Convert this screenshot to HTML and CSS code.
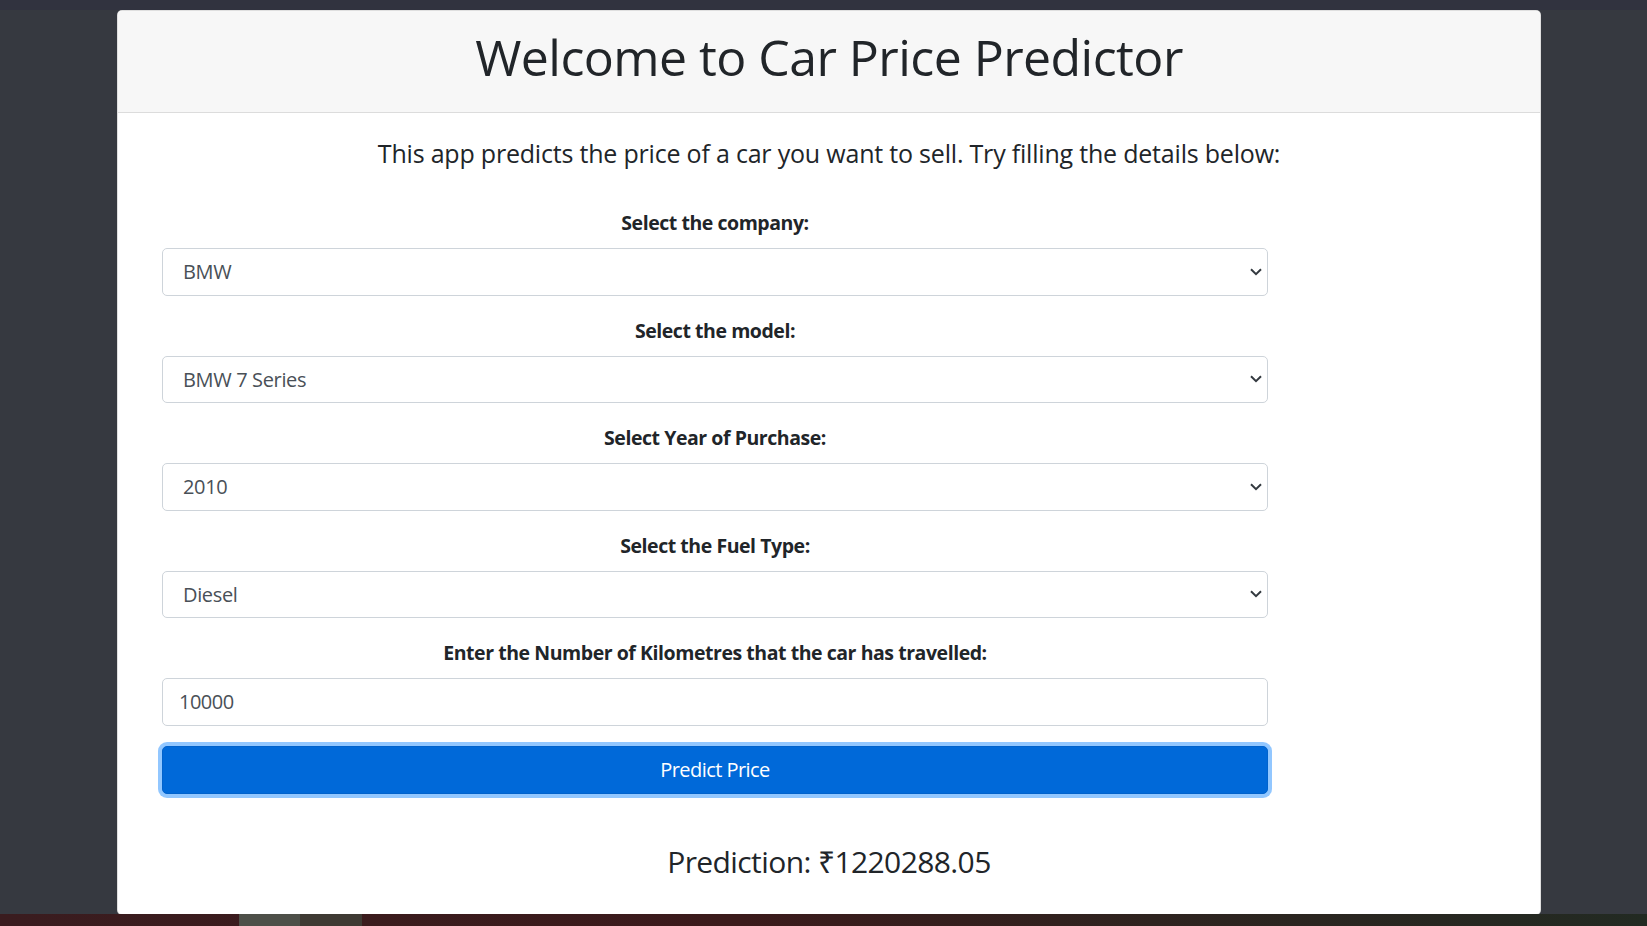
FILE: index.html
```html
<!DOCTYPE html>
<html lang="en">
<head>
<meta charset="utf-8">
<title>Car Price Predictor</title>
<link rel="stylesheet" href="styles.css">
</head>
<body>
  <div class="topbar"></div>
  <main class="page">
    <div class="card">
      <div class="card-header">
        <h1 class="title">Welcome to Car Price Predictor</h1>
      </div>
      <div class="card-body">
        <h5 class="subtitle">This app predicts the price of a car you want to sell. Try filling the details below:</h5>
        <form class="form">
          <div class="group">
            <label class="label" for="company">Select the company:</label>
            <select class="field select" id="company"><option>BMW</option></select>
          </div>
          <div class="group">
            <label class="label" for="model">Select the model:</label>
            <select class="field select" id="model"><option>BMW 7 Series</option></select>
          </div>
          <div class="group">
            <label class="label" for="year">Select Year of Purchase:</label>
            <select class="field select" id="year"><option>2010</option></select>
          </div>
          <div class="group">
            <label class="label" for="fuel">Select the Fuel Type:</label>
            <select class="field select" id="fuel"><option>Diesel</option></select>
          </div>
          <div class="group">
            <label class="label" for="kms">Enter the Number of Kilometres that the car has travelled:</label>
            <input class="field input" id="kms" type="text" value="10000">
          </div>
          <button class="btn" type="button">Predict Price</button>
        </form>
        <h4 class="prediction">Prediction: ₹1220288.05</h4>
      </div>
    </div>
  </main>
  <div class="taskbar"><span class="tb tb-a"></span><span class="tb tb-b"></span></div>
</body>
</html>
```

FILE: styles.css
```css
html, body {
  margin: 0;
  height: 926px;
  overflow: hidden;
}
body {
  background: #363940;
  font-family: "Open Sans", "Noto Sans", "DejaVu Sans", sans-serif;
  color: #212529;
  display: flex;
  flex-direction: column;
}
.topbar {
  height: 10px;
  flex: none;
  background: #31333f;
}
.page {
  flex: 1;
  overflow: hidden;
}
.card {
  margin-left: 117px;
  width: 1424px;
  box-sizing: border-box;
  background: #fff;
  border: 1px solid rgba(0, 0, 0, 0.125);
  border-radius: 5px;
  overflow: hidden;
}
.card-header {
  background: #f7f7f7;
  padding: 16px 25px 15px;
  border-bottom: 1px solid #dcdcdc;
}
.title {
  margin: 0 0 10px;
  font-size: 50px;
  line-height: 60px;
  font-weight: 400;
  letter-spacing: -0.55px;
  text-align: center;
}
.card-body {
  padding: 25px 25px 25px;
}
.subtitle {
  margin: 0 0 40px;
  font-size: 25px;
  line-height: 30px;
  font-weight: 400;
  letter-spacing: -0.2px;
  text-align: center;
}
.form {
  margin-left: 19px;
  width: 1106px;
}
.group {
  margin-bottom: 20px;
}
.label {
  display: block;
  text-align: center;
  font-weight: 700;
  font-size: 19.5px;
  letter-spacing: -0.45px;
  line-height: 30px;
  margin-bottom: 10px;
}
.field {
  display: block;
  width: 100%;
  height: 47.5px;
  box-sizing: border-box;
  border: 1px solid #ced4da;
  border-radius: 5px;
  background-color: #fff;
  color: #495057;
  font-family: inherit;
  font-size: 20px;
  letter-spacing: -0.35px;
  margin: 0;
  outline: none;
}
.select {
  appearance: none;
  -webkit-appearance: none;
  padding: 0 30px 0 20px;
  background-image: url("data:image/svg+xml,%3Csvg xmlns='http://www.w3.org/2000/svg' width='12' height='8' viewBox='0 0 12 8'%3E%3Cpath d='M1 1.2L6 6.2L11 1.2' fill='none' stroke='%23343a40' stroke-width='2'/%3E%3C/svg%3E");
  background-repeat: no-repeat;
  background-position: right 5px center;
  background-size: 12px 8px;
}
.input {
  padding: 0 16px;
  letter-spacing: -0.5px;
}
.btn {
  display: block;
  width: 100%;
  height: 48px;
  box-sizing: border-box;
  background: #0069d9;
  border: 1px solid #0062cc;
  border-radius: 5px;
  color: #fff;
  font-family: inherit;
  font-size: 20px;
  letter-spacing: -0.55px;
  box-shadow: 0 0 0 4px rgba(38, 143, 255, 0.5);
  cursor: pointer;
}
.prediction {
  margin: 50px 0 9px;
  font-size: 30px;
  line-height: 36px;
  font-weight: 400;
  letter-spacing: -0.6px;
  text-align: center;
}
.taskbar {
  height: 12px;
  flex: none;
  display: flex;
  background: linear-gradient(90deg, #3a1c1f 0%, #3b1a1b 45%, #2e231f 70%, #222a22 100%);
}
.tb {
  height: 12px;
}
.tb-a {
  margin-left: 239px;
  width: 61px;
  background: #4d4f48;
}
.tb-b {
  width: 62px;
  background: #3e3a33;
}
```
